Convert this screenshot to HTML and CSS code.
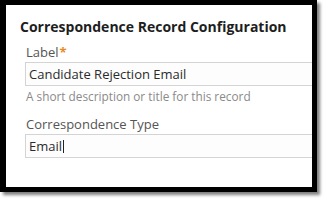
FILE: index.html
```html
<!DOCTYPE html>
<html>
<head>
<meta charset="utf-8">
<link rel="stylesheet" href="styles.css">
</head>
<body>
<div class="frame">
  <div class="panel">
    <h1 class="title">Correspondence Record Configuration</h1>
    <div class="field">
      <div class="label">Label<span class="req">*</span></div>
      <div class="input">Candidate Rejection Email</div>
      <div class="help">A short description or title for this record</div>
    </div>
    <div class="field field-second">
      <div class="label">Correspondence Type</div>
      <div class="input">Email<span class="caret"></span></div>
    </div>
  </div>
</div>
</body>
</html>
```

FILE: styles.css
```css
html, body {
  margin: 0;
  padding: 0;
  background: #fff;
}
body {
  width: 329px;
  height: 204px;
  overflow: hidden;
  font-family: "Open Sans", "Noto Sans", sans-serif;
}
.frame {
  width: 317px;
  height: 192px;
  box-sizing: border-box;
  border-style: solid;
  border-color: #000;
  border-width: 5px 5px 5px 6px;
  box-shadow: 3px 3px 3px rgba(0,0,0,0.5);
  overflow: hidden;
  background: #fff;
}
.panel {
  padding: 12px 0 0 14px;
}
.title {
  margin: 0;
  font-size: 14px;
  line-height: 20px;
  font-weight: 700;
  color: #1e1e1e;
  white-space: nowrap;
}
.field {
  margin-top: 7px;
  padding-left: 6px;
}
.field-second {
  margin-top: 12px;
}
.label {
  font-size: 13px;
  line-height: 17px;
  color: #555;
  margin-bottom: 1px;
}
.req {
  color: #e8891f;
  font-weight: 700;
  margin-left: 1px;
}
.input {
  width: 320px;
  height: 24px;
  box-sizing: border-box;
  border: 1px solid #d4d4d4;
  margin-left: -1px;
  background: #fdfdfd;
  font-size: 13px;
  line-height: 22px;
  color: #2b2b2b;
  padding-left: 3px;
  white-space: nowrap;
  display: flex;
  align-items: center;
}
.caret {
  display: inline-block;
  width: 1px;
  height: 13px;
  background: #222;
  margin-left: 1px;
}
.help {
  font-size: 11.8px;
  line-height: 16px;
  color: #8a8a8a;
  margin-top: 2px;
}
```
